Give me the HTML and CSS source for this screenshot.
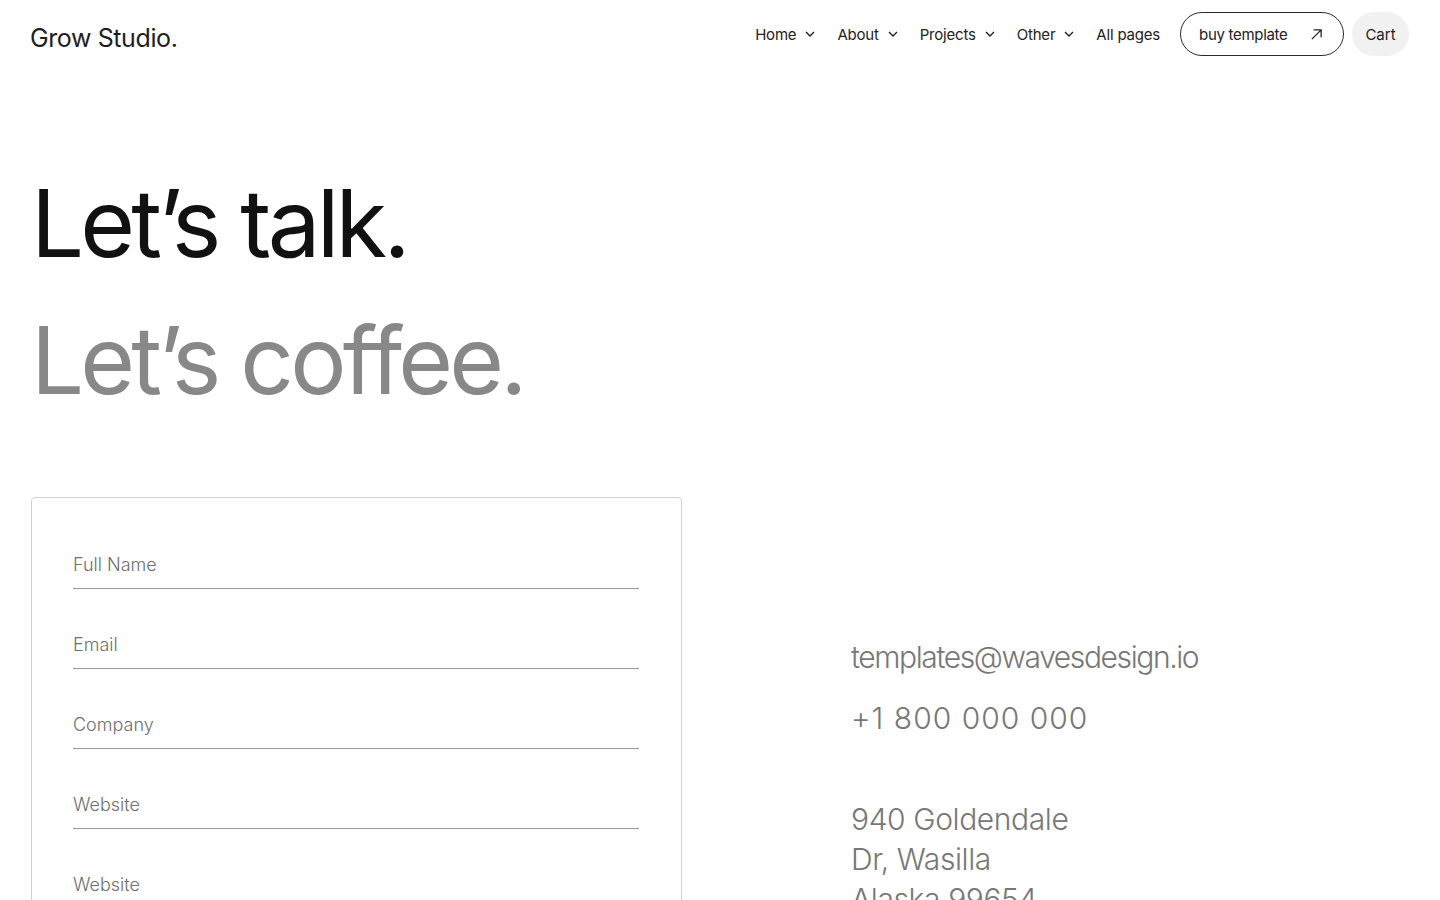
FILE: index.html
```html
<!DOCTYPE html>
<html lang="en">
<head>
<meta charset="utf-8">
<title>Grow Studio — Contact</title>
<link rel="stylesheet" href="styles.css">
</head>
<body>
<header class="header">
  <a class="logo" href="#">Grow Studio.</a>
  <nav class="nav">
    <a class="nav-link" href="#">Home <svg class="chev" viewBox="0 0 12 12"><path d="M2 4l4 4 4-4"/></svg></a>
    <a class="nav-link" href="#">About <svg class="chev" viewBox="0 0 12 12"><path d="M2 4l4 4 4-4"/></svg></a>
    <a class="nav-link" href="#">Projects <svg class="chev" viewBox="0 0 12 12"><path d="M2 4l4 4 4-4"/></svg></a>
    <a class="nav-link" href="#">Other <svg class="chev" viewBox="0 0 12 12"><path d="M2 4l4 4 4-4"/></svg></a>
    <a class="nav-link" href="#">All pages</a>
    <a class="btn-outline" href="#">buy template <svg class="arrow" viewBox="0 0 14 14"><path d="M2 12L12 2M4 2h8v8"/></svg></a>
    <a class="btn-cart" href="#">Cart</a>
  </nav>
</header>

<main class="main">
  <h1 class="hero">
    <span class="hero-line">Let’s talk.</span>
    <span class="hero-line muted">Let’s coffee.</span>
  </h1>

  <section class="contact">
    <form class="form">
      <label class="field"><span class="field-label">Full Name</span></label>
      <label class="field"><span class="field-label">Email</span></label>
      <label class="field"><span class="field-label">Company</span></label>
      <label class="field"><span class="field-label">Website</span></label>
      <label class="field"><span class="field-label">Website</span></label>
    </form>
    <div class="info">
      <p class="info-line email">templates@wavesdesign.io</p>
      <p class="info-line phone">+1 800 000 000</p>
      <p class="info-line address">940 Goldendale<br>Dr, Wasilla<br>Alaska 99654</p>
    </div>
  </section>
</main>
</body>
</html>
```

FILE: styles.css
```css
* { box-sizing: border-box; }
html, body { margin: 0; padding: 0; background: #fff; }
body {
  font-family: "Inter", "Liberation Sans", sans-serif;
  color: #1a1a1a;
  overflow: hidden;
}
a { color: inherit; text-decoration: none; }

.header {
  display: flex;
  justify-content: space-between;
  align-items: center;
  padding: 12px 31px 0 30px;
  height: 56px;
}
.logo {
  font-size: 25px;
  font-weight: 400;
  letter-spacing: -0.4px;
  color: #1e1e1e;
  margin-top: 8px;
}
.nav {
  display: flex;
  align-items: center;
}
.nav-link {
  display: flex;
  align-items: center;
  gap: 8px;
  font-size: 15px;
  color: #222;
  margin-right: 21px;
  letter-spacing: -0.2px;
}
.nav-link:nth-child(5) { margin-right: 20px; }
.chev {
  width: 12px;
  height: 12px;
  fill: none;
  stroke: #222;
  stroke-width: 1.4;
}
.btn-outline {
  display: flex;
  align-items: center;
  justify-content: space-between;
  width: 164px;
  height: 44px;
  padding: 0 20px 0 18px;
  border: 1.5px solid #2a2a2a;
  border-radius: 22px;
  font-size: 15px;
  color: #222;
  letter-spacing: -0.3px;
}
.arrow {
  width: 13px;
  height: 13px;
  fill: none;
  stroke: #222;
  stroke-width: 1.4;
}
.btn-cart {
  display: flex;
  align-items: center;
  justify-content: center;
  width: 57px;
  height: 44px;
  margin-left: 8px;
  border-radius: 22px;
  background: #f1f1f1;
  font-size: 15px;
  color: #222;
}

.main {
  padding: 0 31px;
}
.hero {
  margin: 99px 0 0 0;
  font-size: 94px;
  font-weight: 400;
  line-height: 137px;
  letter-spacing: -3.8px;
  color: #111;
}
.hero-line { display: block; margin-left: 0; }
.muted { color: #888; }

.contact {
  display: flex;
  align-items: flex-start;
  gap: 169px;
  margin-top: 68px;
}
.form {
  width: 651px;
  flex: none;
  border: 1px solid #d2d2d2;
  border-radius: 4px;
  padding: 11px 42px 40px 41px;
  margin: 0;
}
.field {
  display: flex;
  align-items: flex-end;
  height: 80px;
  padding-bottom: 12px;
  border-bottom: 1.5px solid #9a9a9a;
}
.field-label {
  font-size: 18px;
  line-height: 22px;
  font-weight: 300;
  color: #6f6f6f;
}
.info {
  padding-top: 140px;
}
.info-line {
  margin: 0;
  font-size: 30px;
  line-height: 40px;
  font-weight: 300;
  color: #777;
  letter-spacing: -0.4px;
}
.email { letter-spacing: -1.4px; }
.phone { margin-top: 21px; letter-spacing: 1px; }
.address { margin-top: 61px; }
```
